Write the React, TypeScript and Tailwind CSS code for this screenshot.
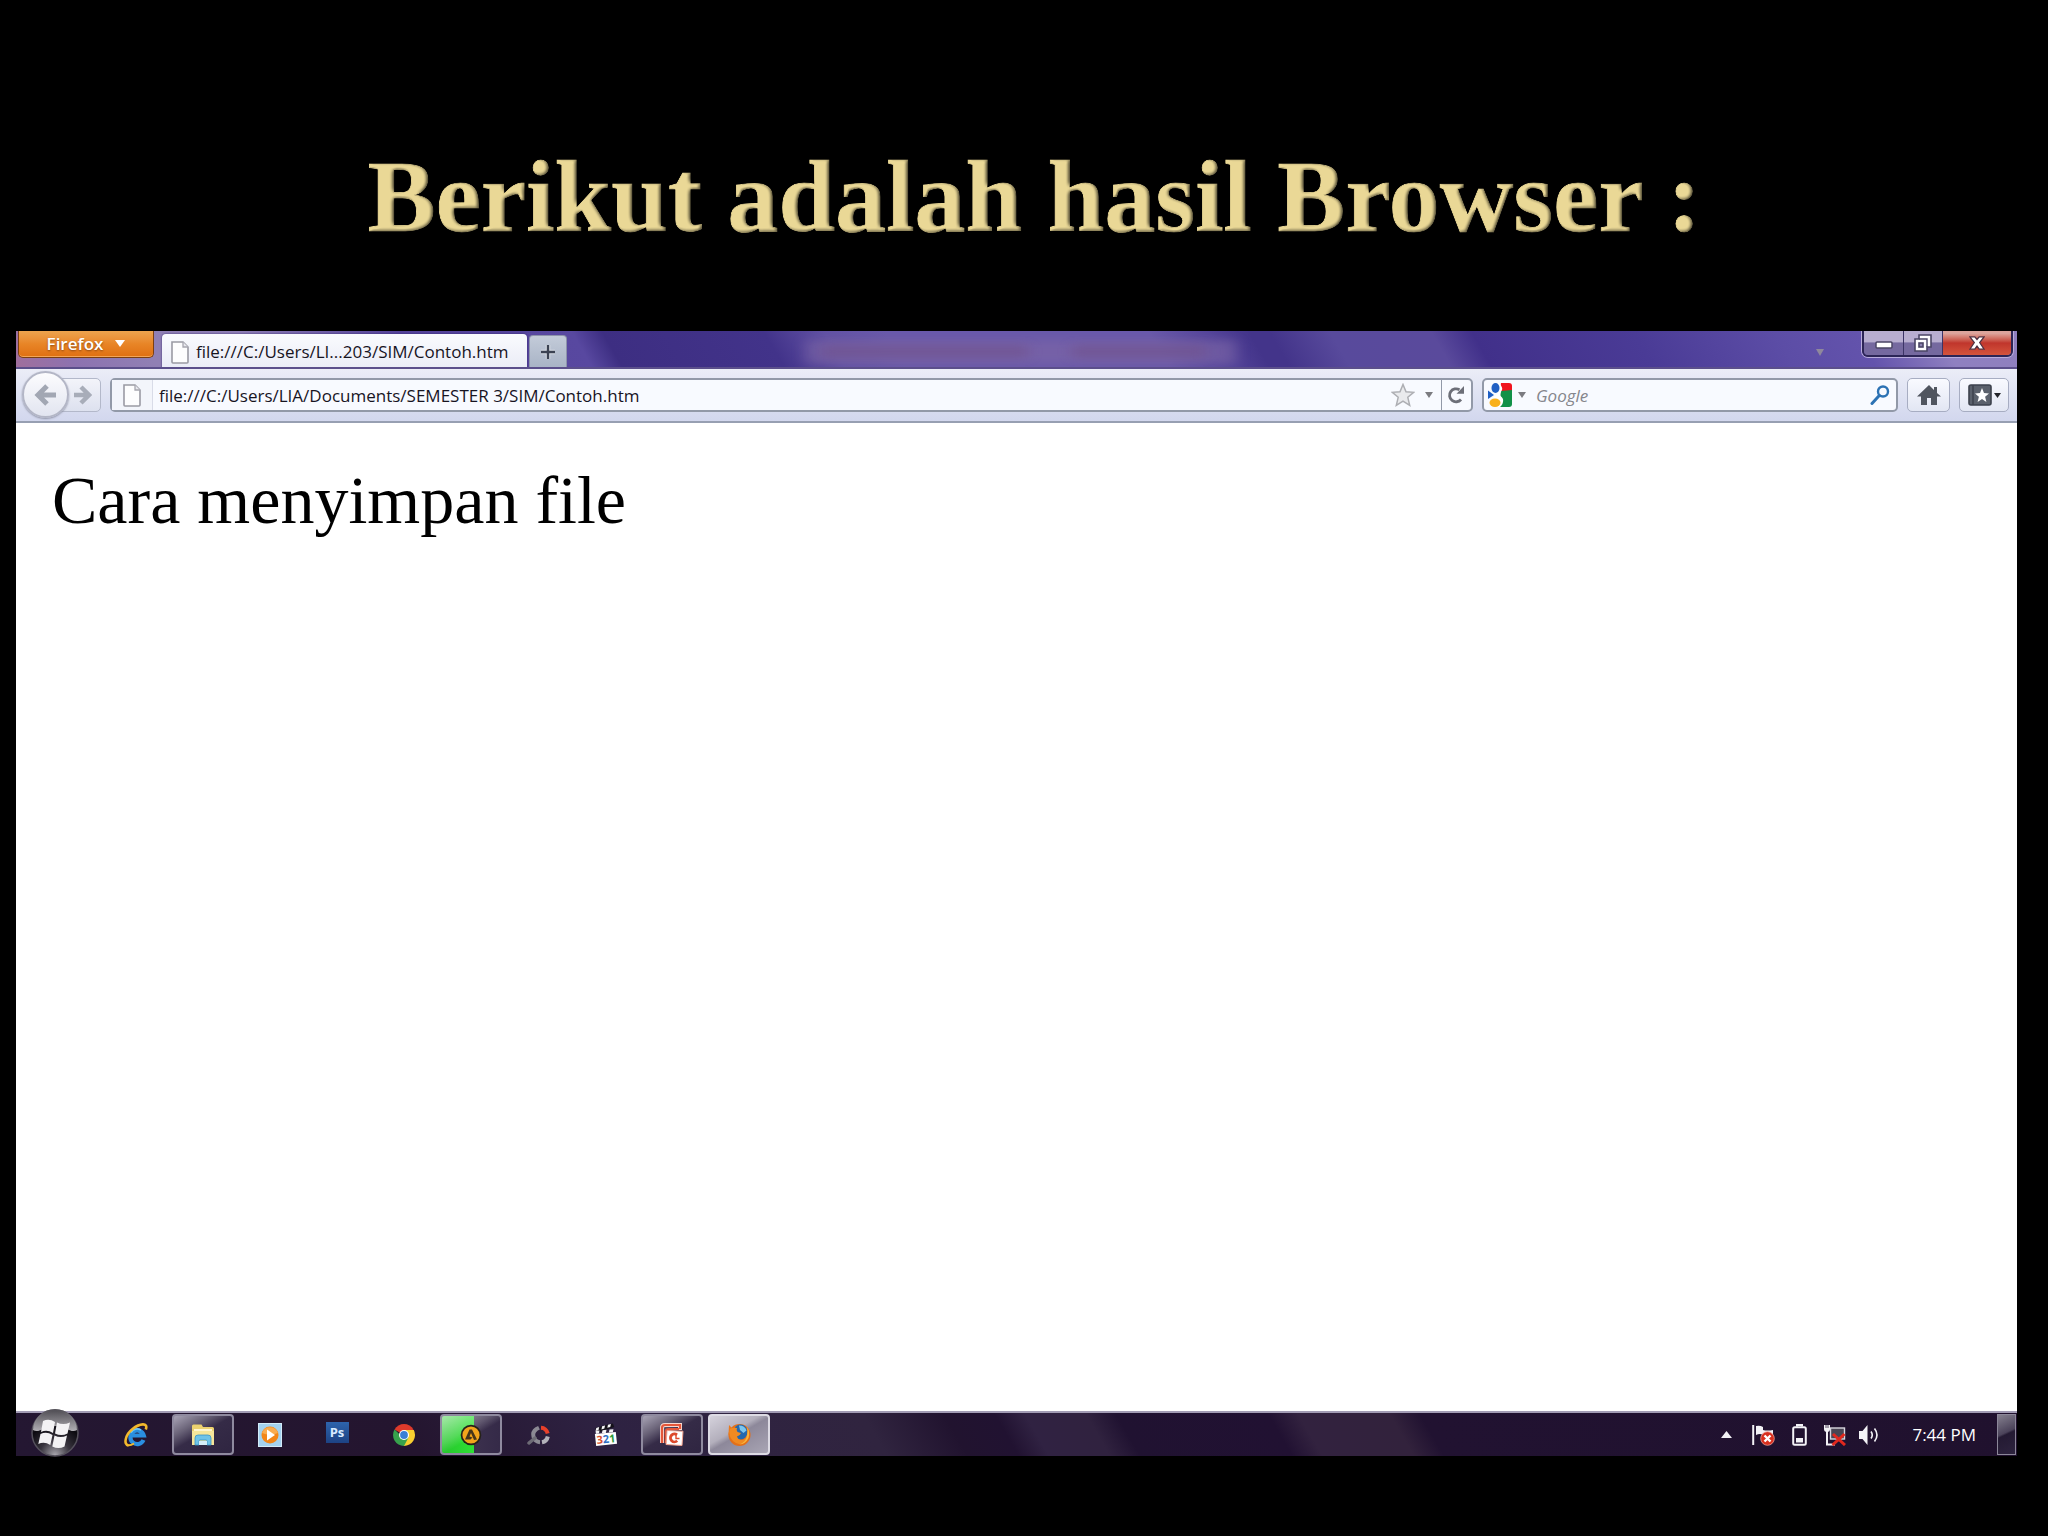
import React from "react";

function PageIcon() {
  return (
    <svg className="h-6 w-[18px] shrink-0" viewBox="0 0 18 24" fill="none" aria-hidden="true">
      <path d="M1 2h11l5 5v15a1 1 0 0 1-1 1H2a1 1 0 0 1-1-1z" fill="#fdfdfe" stroke="#9a9aa4" strokeWidth="1.6" />
      <path d="M12 2v5h5" fill="#e8e8ee" stroke="#a7a7b0" strokeWidth="1.3" />
    </svg>
  );
}

function Caret({ color = "#7b7b80" }: { color?: string }) {
  return (
    <svg className="h-[7px] w-[10px] shrink-0" viewBox="0 0 10 7" aria-hidden="true">
      <path d="M0 0h10L5 7z" fill={color} />
    </svg>
  );
}

function TitleBar() {
  return (
    <div className="relative flex h-[38px] items-start overflow-hidden border-b-2 border-[#5b4f8b] bg-[linear-gradient(60deg,#a06f9c_0,#8d72b0_3%,#9080b4_7%,#8f7fb6_12%,#55439a_20%,#5848a0_28.5%,#3d2e82_30%,#42338a_38%,#6151a4_41%,#6959aa_44%,#6959aa_57%,#54449a_60%,#43348a_62%,#43348a_63%,#584a9c_66%,#5a4a9c_71%,#41308a_73%,#4a3b96_81%,#5c4da6_88%,#6353ac_92%,#8f80c0_96%,#8f7fbe_100%)]">
      <svg className="absolute inset-y-0 left-[760px] h-full w-[520px]" viewBox="0 0 520 36" preserveAspectRatio="none" aria-hidden="true">
        <defs>
          <filter id="glow" x="-20%" y="-80%" width="140%" height="260%">
            <feGaussianBlur stdDeviation="7 4" />
          </filter>
        </defs>
        <rect x="30" y="9" width="430" height="24" fill="#7d66a6" opacity=".6" filter="url(#glow)" />
        <rect x="46" y="14" width="206" height="13" fill="#70518c" opacity=".6" filter="url(#glow)" />
        <rect x="296" y="14" width="134" height="13" fill="#70518c" opacity=".6" filter="url(#glow)" />
      </svg>
      <button className="relative ml-[2px] flex h-[27px] w-[136px] items-center justify-center gap-3 rounded-b-[5px] border border-t-0 border-[#7c3f10] bg-linear-to-b from-[#eda44e] via-[#e88526] to-[#df6f10] pb-px font-['Open_Sans','Noto_Sans',sans-serif] text-[17px] font-semibold text-white [text-shadow:0_1px_2px_#8a4510] shadow-[inset_0_-1px_0_#f3a556]">
        Firefox
        <Caret color="#ffffff" />
      </button>
      <div className="relative ml-2 mt-[3px] flex h-[36px] w-[365px] items-center rounded-t-[4px] bg-linear-to-b from-[#fafbfe] to-[#e9ebf6] pl-[9px] shadow-[0_0_2px_#2d2168]">
        <PageIcon />
        <span className="ml-[7px] whitespace-nowrap text-[17px] text-[#17141f]">file:///C:/Users/LI...203/SIM/Contoh.htm</span>
      </div>
      <button aria-label="New tab" className="relative ml-[2px] mt-1 flex h-8 w-[38px] items-center justify-center rounded-t-[4px] border border-b-0 border-[#8d93ab] bg-linear-to-b from-[#c3cbd9] to-[#a9b4c6]">
        <svg className="size-4" viewBox="0 0 16 16" aria-hidden="true">
          <path d="M8 1v14M1 8h14" stroke="#fff" strokeOpacity=".5" strokeWidth="4.5" />
          <path d="M8 1v14M1 8h14" stroke="#3b4252" strokeWidth="2.4" />
        </svg>
      </button>
      <div className="relative ml-auto flex items-start">
        <svg className="mr-[38px] mt-[18px] h-[7px] w-2" viewBox="0 0 8 7" aria-hidden="true">
          <path d="M0 0h8L4 7z" fill="#8f889c" />
        </svg>
        <div className="mr-1 flex h-[26px] w-[151px] overflow-hidden rounded-b-[6px] border-2 border-t-0 border-[#2c2556] shadow-[0_0_0_1px_#b9addd]">
          <button aria-label="Minimize" className="flex w-10 items-center justify-center border-r border-[#3c3466] bg-linear-to-b from-[#b8aed0] from-45% to-[#75699f] to-50%">
            <svg className="mt-1 h-2 w-[18px]" viewBox="0 0 18 8" aria-hidden="true">
              <rect x="1" y="1" width="16" height="6" rx="1" fill="#fff" stroke="#4b4666" strokeWidth="1.5" />
            </svg>
          </button>
          <button aria-label="Restore" className="flex w-[39px] items-center justify-center border-r border-[#3c3466] bg-linear-to-b from-[#b8aed0] from-45% to-[#75699f] to-50%">
            <svg className="h-[18px] w-[18px]" viewBox="0 0 18 18" aria-hidden="true">
              <path d="M5 1h12v12h-4v4H1V5h4z" fill="#fff" stroke="#4b4666" strokeWidth="1.6" />
              <path d="M5 5h8v8" fill="none" stroke="#4b4666" strokeWidth="1.4" />
              <rect x="5" y="9" width="4" height="4" fill="#8d83b2" stroke="#4b4666" strokeWidth="1.6" />
            </svg>
          </button>
          <button aria-label="Close" className="flex flex-1 items-center justify-center bg-linear-to-b from-[#dca49c] from-10% via-[#c0352c] via-50% to-[#d4543c]">
            <svg className="h-4 w-[16px]" viewBox="0 0 18 16" aria-hidden="true">
              <path d="M1 1h5.500L9 4 11.500 1H17l-5 6.500L17 15h-5.500L9 11.500 6.500 15H1l5-7.500z" fill="#fff" stroke="#503040" strokeWidth="1.400" />
            </svg>
          </button>
        </div>
      </div>
    </div>
  );
}

function GoogleIcon() {
  return (
    <svg className="h-6 w-6 shrink-0" viewBox="0 0 24 24" aria-hidden="true">
      <path d="M11 0h10a3 3 0 0 1 3 3v5H13z" fill="#f0141e" />
      <path d="M13 8l11-1v14a3 3 0 0 1-3 3H11z" fill="#119147" />
      <path d="M0 7.500l6 4.500-6 4z" fill="#1f5fc4" />
      <path d="M10 0h3c-1 3 2 4 1 7-1 2.500-3 3-2 5s4 3 3 7c-.6 3-2 4-3 5H9l-4-9 5-5z" fill="#fff" />
      <ellipse cx="7.500" cy="5" rx="4" ry="5" fill="#1f5fc4" />
      <ellipse cx="7" cy="19.800" rx="5.500" ry="4.200" fill="#f9b01b" />
    </svg>
  );
}

function Toolbar() {
  return (
    <div className="flex h-[54px] items-start border-b-2 border-[#979fb2] bg-linear-to-b from-[#ebedf7] to-[#d2d7ee] pl-[6px] pr-2">
      <div className="mt-[2px] flex shrink-0 items-center">
        <button aria-label="Back" className="relative flex size-[47px] items-center justify-center rounded-full border-2 border-[#b3b6c6] bg-linear-to-b from-[#fcfcfe] to-[#e2e5f0] shadow-[0_1px_2px_#8f93a6]">
          <svg className="h-[22px] w-[23px]" viewBox="0 0 23 22" fill="none" aria-hidden="true">
            <path d="M13 2L4 11l9 9M4 11h18" stroke="#a2a7b3" strokeWidth="5" />
          </svg>
        </button>
        <button aria-label="Forward" className="-ml-2 flex h-[34px] w-10 items-center justify-center rounded-r-[5px] border border-[#b3b8ca] bg-linear-to-b from-[#f3f4fa] to-[#dde1ef] pl-1">
          <svg className="h-5 w-[18px]" viewBox="0 0 18 20" fill="none" aria-hidden="true">
            <path d="M7 2l8 8-8 8M14 10H0" stroke="#a8adb9" strokeWidth="4.500" />
          </svg>
        </button>
      </div>
      <div className="ml-[9px] mt-[9px] flex h-[34px] flex-1 items-center rounded-[5px] border-2 border-[#9299a8] bg-[#f8faff]">
        <div className="flex h-full w-[41px] items-center justify-center border-r border-[#d9dce8] bg-[#f3f5fb]">
          <PageIcon />
        </div>
        <input
          aria-label="Address"
          defaultValue="file:///C:/Users/LIA/Documents/SEMESTER 3/SIM/Contoh.htm"
          className="ml-[6px] h-full min-w-0 flex-1 bg-transparent text-[17px] text-[#17141f] outline-none"
        />
        <button aria-label="Bookmark this page" className="flex items-center">
          <svg className="size-6" viewBox="0 0 24 24" aria-hidden="true">
            <path d="M12 1.500l3 7.200 7.700.6-5.900 5 1.900 8L12 18.200 5.300 22.300l1.900-8-5.900-5 7.700-.6z" fill="#e9eaed" stroke="#adaeb3" strokeWidth="1.500" />
          </svg>
        </button>
        <button aria-label="Show history" className="ml-[10px] mr-2 flex items-center">
          <svg className="h-[6px] w-2" viewBox="0 0 8 6" aria-hidden="true">
            <path d="M0 0h8L4 6z" fill="#7b7b80" />
          </svg>
        </button>
        <button aria-label="Reload" className="flex h-full w-[30px] items-center justify-center border-l border-[#9299a8] pr-[2px]">
          <svg className="h-[18px] w-[18px]" viewBox="0 0 18 18" fill="none" aria-hidden="true">
            <path d="M14 13.500A6.500 6.500 0 1 1 12.500 3.800" stroke="#6d6f78" strokeWidth="2.800" />
            <path d="M9.500 7.800h7.500V0z" fill="#6d6f78" />
          </svg>
        </button>
      </div>
      <div className="ml-[9px] mt-[9px] flex h-[34px] w-[416px] shrink-0 items-center rounded-[5px] border-2 border-[#9299a8] bg-[#f8faff] pl-1 pr-[6px]">
        <GoogleIcon />
        <button aria-label="Choose search engine" className="ml-[6px] flex items-center">
          <svg className="h-[6px] w-2" viewBox="0 0 8 6" aria-hidden="true">
            <path d="M0 0h8L4 6z" fill="#7b7b80" />
          </svg>
        </button>
        <input aria-label="Search" placeholder="Google" className="ml-[10px] h-full min-w-0 flex-1 bg-transparent text-[17px] italic outline-none placeholder:text-[#85868c]" />
        <button aria-label="Search the web" className="flex items-center">
          <svg className="size-5" viewBox="0 0 20 20" fill="none" aria-hidden="true">
            <circle cx="13" cy="6.500" r="5" stroke="#2c72b4" strokeWidth="2.400" />
            <path d="M9.300 10.500L2 18.500" stroke="#2c72b4" strokeWidth="3" strokeLinecap="round" />
          </svg>
        </button>
      </div>
      <button aria-label="Home" className="ml-[9px] mt-[9px] flex h-[34px] w-[43px] shrink-0 items-center justify-center rounded-[5px] border border-[#a7adc2] bg-linear-to-b from-[#f9faff] to-[#e2e6f3]">
        <svg className="h-5 w-6" viewBox="0 0 24 20" aria-hidden="true">
          <path d="M12 0l5 5V2h3v6l4 3.500h-4V20h-6v-7h-4v7H4v-8.500H0z" fill="#50555f" />
        </svg>
      </button>
      <button aria-label="Bookmarks" className="ml-[9px] mt-[9px] flex h-[34px] w-[50px] shrink-0 items-center justify-center gap-[2px] rounded-[5px] border border-[#a7adc2] bg-linear-to-b from-[#f9faff] to-[#e2e6f3]">
        <svg className="h-[22px] w-6" viewBox="0 0 24 22" aria-hidden="true">
          <rect x="1" y="1" width="22" height="20" rx="2" fill="#5b616c" stroke="#3d424d" strokeWidth="1.600" />
          <path d="M5 1v20" stroke="#3d424d" strokeWidth="1.500" />
          <path d="M14 4l2 5 5 .4-3.900 3.300 1.300 5.300-4.400-2.900-4.400 2.900 1.300-5.300L7 9.400 12 9z" fill="#fff" />
        </svg>
        <svg className="h-[5px] w-[7px]" viewBox="0 0 7 5" aria-hidden="true">
          <path d="M0 0h7L3.500 5z" fill="#22242a" />
        </svg>
      </button>
    </div>
  );
}

function StartIcon() {
  return (
    <svg className="h-[50px] w-[48px]" viewBox="0 0 48 50" aria-hidden="true">
      <defs>
        <radialGradient id="orb" cx="50%" cy="98%" r="95%">
          <stop offset="0" stopColor="#a8a6ad" />
          <stop offset=".35" stopColor="#37333d" />
          <stop offset=".7" stopColor="#0c0a10" />
          <stop offset="1" stopColor="#3c3942" />
        </radialGradient>
        <linearGradient id="orbTop" x1="0" y1="0" x2="0" y2="1">
          <stop offset="0" stopColor="#4c4a50" />
          <stop offset="1" stopColor="#cfcdd2" />
        </linearGradient>
      </defs>
      <circle cx="24" cy="25" r="23" fill="url(#orb)" stroke="#55515c" strokeWidth="1.500" />
      <path d="M2 22A22 21 0 0 1 46 22C40 26 35 18 24 18S8 26 2 22z" fill="url(#orbTop)" opacity=".85" />
      <g fill="#f3f2f4">
        <path d="M12 13q6-3 12 1l-2 11q-6-4-12-1z" />
        <path d="M26 14.500q6 3 13 0l-2.500 11q-6 3-12.500 0z" />
        <path d="M9.500 26q6-3 12 1l-2.200 10q-6-4-12-1z" />
        <path d="M23.500 27.500q6 3 12.500 0l-2.500 11q-6 3-12.200 0z" />
      </g>
    </svg>
  );
}

function IeIcon() {
  return (
    <svg className="size-6" viewBox="0 0 24 24" fill="none" aria-hidden="true">
      <path d="M19.500 17A6.800 6.800 0 1 1 19.800 12.500H8" stroke="#2a8fe0" strokeWidth="4.200" />
      <path d="M17 7A7 7 0 0 0 7 9.500" stroke="#6cc8fa" strokeWidth="1.800" />
      <path d="M4.500 22.500C-1 21.500 1.500 11.500 8.500 6S24.500-1 21.800 6.500" stroke="#f3b92c" strokeWidth="2.600" />
      <path d="M3 22q3 1 7-1.500" stroke="#f3b92c" strokeWidth="2" />
    </svg>
  );
}

function FolderIcon() {
  return (
    <svg className="h-[22px] w-6" viewBox="0 0 24 22" aria-hidden="true">
      <path d="M1 2q0-1.500 1.500-1.500h8L12 3h9.500Q23 3 23 4.500V20H1z" fill="#ecd26f" />
      <path d="M3 5h18v3H3z" fill="#fff6cf" />
      <path d="M1 7h22v14H1z" fill="#f7e69a" />
      <path d="M4 21v-7q0-3 3-3h10q3 0 3 3v7h-4v-4q0-1-1-1H9q-1 0-1 1v4z" fill="#6fc3e8" stroke="#3b93c2" strokeWidth=".8" />
      <path d="M8 21v-4h8v4z" fill="#d6eef8" />
    </svg>
  );
}

function MediaIcon() {
  return (
    <svg className="size-6" viewBox="0 0 24 24" aria-hidden="true">
      <rect x=".5" y=".5" width="23" height="23" fill="#a4d2ef" stroke="#d3ebf8" />
      <circle cx="12" cy="12" r="8.500" fill="#f28618" />
      <path d="M4 10a8.500 8.500 0 0 1 16 0q-8 3-16 0z" fill="#f9ac50" />
      <path d="M9 6.500l8 5.500-8 5.500z" fill="#fff" />
    </svg>
  );
}

function PsIcon() {
  return (
    <span className="mb-1 flex h-[21px] w-[23px] items-center justify-center bg-linear-to-b from-[#2e64ac] to-[#1d4384] text-[13px] font-bold leading-none text-[#d9ecff]">
      Ps
    </span>
  );
}

function ChromeIcon() {
  return (
    <svg className="size-[22px]" viewBox="0 0 22 22" aria-hidden="true">
      <path d="M11 11L1.500 5.500A11 11 0 0 1 20.500 5.500z" fill="#de3a2b" />
      <path d="M11 6h9.800A11 11 0 0 1 11 22z" fill="#f8cf30" />
      <path d="M1.500 5.500A11 11 0 0 0 11 22l4.500-8.500-4.500 1z" fill="#37a24c" />
      <circle cx="11" cy="11" r="5" fill="#fff" />
      <circle cx="11" cy="11" r="3.900" fill="#3a7fd5" />
    </svg>
  );
}

function AudioIcon() {
  return (
    <svg className="size-[22px]" viewBox="0 0 22 22" aria-hidden="true">
      <circle cx="11" cy="11" r="10.300" fill="#262219" />
      <circle cx="11" cy="11" r="8.600" fill="#f2a51c" />
      <path d="M5 15.500l4.500-10h2.500l5 10-3 .5-3-7-1.500 3.500 3 1-2 2z" fill="#46351a" />
    </svg>
  );
}

function CleanerIcon() {
  return (
    <svg className="h-5 w-[23px]" viewBox="0 0 23 20" fill="none" aria-hidden="true">
      <path d="M14 2.800A7.200 7.200 0 0 1 20.700 8.500" stroke="#e8402a" strokeWidth="4" />
      <path d="M20.800 11.500A7.200 7.200 0 0 1 15 17.200" stroke="#b3b2ba" strokeWidth="4" />
      <path d="M13 17.200A7.200 7.200 0 0 1 9.500 4L12 2.800" stroke="#8b8993" strokeWidth="4" />
      <path d="M8 13l-6 5" stroke="#6d6b75" strokeWidth="3.500" strokeLinecap="round" />
    </svg>
  );
}

function ClapperIcon() {
  return (
    <span className="flex w-[21px] flex-col -rotate-6">
      <svg className="h-[9px] w-full" viewBox="0 0 21 9" aria-hidden="true">
        <path d="M1 3l18-3 1 4-18 4z" fill="#15121a" />
        <path d="M2 3l3-.5-1 3-3 .5zM8 2l3-.5-1 3-3 .5zM14 1l3-.5-1 3-3 .5z" fill="#f4f4f6" />
        <path d="M1 6h4l-1 3H1zM8 6h4l-1 3H7zM15 6h4l-1 3h-4z" fill="#f4f4f6" />
      </svg>
      <span className="flex justify-center bg-white text-[11px] font-bold leading-3">
        <span className="text-[#d9512c]">3</span>
        <span className="text-[#2f6fc4]">2</span>
        <span className="text-[#2f9b3c]">1</span>
      </span>
    </span>
  );
}

function SlidesIcon() {
  return (
    <svg className="h-[23px] w-6" viewBox="0 0 24 23" fill="none" aria-hidden="true">
      <path d="M2 20V5q0-3 3-3h15v5" stroke="#f7d9d0" strokeWidth="4" />
      <path d="M2 20V5q0-3 3-3h15v4" stroke="#e4573a" strokeWidth="2.200" />
      <path d="M5.500 20V9q0-3 3-3H19" stroke="#e4573a" strokeWidth="1.800" />
      <path d="M7 7.500l16 .7-1 14.300-16-1z" fill="#fff" stroke="#f0a08c" strokeWidth="1" />
      <path d="M17 11.800A4 4 0 1 0 17.200 17.800" stroke="#dc4a2c" strokeWidth="2.800" />
      <path d="M16 12v3.500h3.500" stroke="#dc4a2c" strokeWidth="1.400" />
    </svg>
  );
}

function FirefoxIcon() {
  return (
    <svg className="size-6" viewBox="0 0 24 24" aria-hidden="true">
      <circle cx="12.500" cy="12" r="11" fill="#e3701a" />
      <path d="M1.500 12L2 2l3.500 3.500L11 3z" fill="#ea7a1c" />
      <ellipse cx="13.500" cy="9" rx="7" ry="7.500" fill="#2468ae" />
      <path d="M12 2.500q6 0 7.500 5l-3 2.500-3.500-3z" fill="#7cc6ee" />
      <path d="M3 6q3-2 7-1-1 2 .5 4l3.500 1q-1 3-4 3.500 1 4 6 3.500 3-1 4-5 1 5-3 8-6 3-11-2Q1 13 3 6z" fill="#f08a22" />
      <path d="M20 4q3.500 5 1.500 11-3 6-9 6.500 7-3 7.500-9Q21 8 20 4z" fill="#f8b43c" />
    </svg>
  );
}

type Task = { name: string; icon: React.ReactNode; state: "idle" | "open" | "progress" | "active" };

const tasks: Task[] = [
  { name: "Internet Explorer", icon: <IeIcon />, state: "idle" },
  { name: "Windows Explorer", icon: <FolderIcon />, state: "open" },
  { name: "Windows Media Player", icon: <MediaIcon />, state: "idle" },
  { name: "Photoshop", icon: <PsIcon />, state: "idle" },
  { name: "Chrome", icon: <ChromeIcon />, state: "idle" },
  { name: "Audio player", icon: <AudioIcon />, state: "progress" },
  { name: "CCleaner", icon: <CleanerIcon />, state: "idle" },
  { name: "Media Player Classic", icon: <ClapperIcon />, state: "idle" },
  { name: "PowerPoint", icon: <SlidesIcon />, state: "open" },
  { name: "Firefox", icon: <FirefoxIcon />, state: "active" },
];

const stateClass = {
  idle: "border-transparent",
  open: "border-[#8f8a9f] bg-[linear-gradient(150deg,#a9a4b6_0%,#6a6378_28%,#352b47_48%,#2f2541_100%)]",
  progress:
    "border-[#8f8a9f] bg-[linear-gradient(150deg,#ffffff99_0%,#ffffff33_40%,#ffffff00_55%),linear-gradient(90deg,#25c62c_0%,#2fe035_55%,#3b304d_55%,#352a48_100%)]",
  active: "border-[#dddbe4] bg-[linear-gradient(150deg,#d5d2dc_0%,#b3afbc_40%,#8d889a_50%,#a9a5b4_100%)]",
};

function Tray() {
  return (
    <div className="ml-auto flex h-full items-center">
      <button aria-label="Show hidden icons" className="flex items-center">
        <svg className="h-[7px] w-[11px]" viewBox="0 0 11 7" aria-hidden="true">
          <path d="M5.500 0L11 7H0z" fill="#f1f0f4" />
        </svg>
      </button>
      <button aria-label="Action center" className="ml-5 flex items-center">
        <svg className="h-[22px] w-[23px]" viewBox="0 0 23 22" aria-hidden="true">
          <path d="M1.200 1v20" stroke="#f3f2f6" strokeWidth="2" />
          <path d="M4 2q4-1 7 1v3q4 1 10 0v6q-6 2-10-1-3-2-7 0z" fill="#f3f2f6" />
          <circle cx="15.500" cy="14.500" r="6.800" fill="#d8301f" stroke="#f0a096" strokeWidth=".8" />
          <path d="M12.500 11.500l6 6M18.500 11.500l-6 6" stroke="#fff" strokeWidth="2.400" />
        </svg>
      </button>
      <button aria-label="Battery" className="ml-[17px] flex items-center">
        <svg className="h-[22px] w-[15px]" viewBox="0 0 15 22" aria-hidden="true">
          <path d="M5 2.500V1h5v1.500" fill="none" stroke="#f3f2f6" strokeWidth="2" />
          <rect x="1.200" y="3.200" width="12.600" height="17.500" rx="1.500" fill="none" stroke="#f3f2f6" strokeWidth="2" />
          <path d="M4 14h7v4.500H4z" fill="#f3f2f6" />
        </svg>
      </button>
      <button aria-label="Network" className="ml-4 flex items-center">
        <svg className="h-[22px] w-[23px]" viewBox="0 0 23 22" fill="none" aria-hidden="true">
          <rect x="7.500" y="4" width="14" height="11" fill="#4a4654" stroke="#d8d6de" strokeWidth="1.400" />
          <path d="M1 1h6v4q0 3-3 3T1 5z" fill="#f3f2f6" />
          <path d="M4 6v14.500h8" stroke="#f3f2f6" strokeWidth="2" />
          <path d="M3 1v3M5 1v3" stroke="#2a1d38" strokeWidth=".8" />
          <path d="M10 10l12 11M21.500 10L9.500 21" stroke="#e2281e" strokeWidth="3" />
        </svg>
      </button>
      <button aria-label="Volume" className="ml-3 flex items-center">
        <svg className="h-[22px] w-[22px]" viewBox="0 0 22 22" fill="none" aria-hidden="true">
          <path d="M1 7h3.500L9.500 1v20L4.500 15H1z" fill="#f3f2f6" />
          <path d="M13 7.500q2.500 3.500 0 7M16.500 4.500q5 6.500 0 13" stroke="#f3f2f6" strokeWidth="1.600" />
        </svg>
      </button>
      <time className="ml-8 whitespace-nowrap text-[17px] text-white">7:44 PM</time>
      <button aria-label="Show desktop" className="ml-[21px] mr-px h-[41px] w-[19px] border border-[#8c8799] bg-[linear-gradient(155deg,#85808f_0%,#4b435a_45%,#241a33_50%,#2d233e_100%)]" />
    </div>
  );
}

function Taskbar() {
  return (
    <div className="flex h-[45px] items-center border-t-2 border-[#a29cb4] bg-[linear-gradient(60deg,#241732_0%,#24152f_20%,#2e2242_30%,#30243f_43%,#21132f_47%,#211231_49.5%,#302242_51%,#30223f_54%,#201231_55.500%,#211132_63%,#32223f_64.500%,#32223c_69%,#211231_70.500%,#20112e_100%)]">
      <button aria-label="Start" className="relative -mt-1 ml-[15px] flex w-12 items-center justify-center">
        <StartIcon />
      </button>
      <div className="ml-[26px] flex gap-[5px]">
        {tasks.map((t) => (
          <button key={t.name} aria-label={t.name} className={`flex h-[41px] w-[62px] items-center justify-center rounded-[4px] border-2 ${stateClass[t.state]}`}>
            {t.icon}
          </button>
        ))}
      </div>
      <Tray />
    </div>
  );
}

export default function App() {
  return (
    <div className="flex min-h-screen flex-col bg-black pb-20 pl-4 pr-[31px] font-['Open_Sans','Noto_Sans',sans-serif]">
      <svg className="absolute size-0" aria-hidden="true">
        <defs>
          <filter id="bevel" x="-5%" y="-20%" width="110%" height="140%" colorInterpolationFilters="sRGB">
            <feMorphology in="SourceAlpha" operator="dilate" radius="1" result="bold" />
            <feGaussianBlur in="bold" stdDeviation="2" result="height" />
            <feDiffuseLighting in="height" surfaceScale="5" diffuseConstant="1.200" lightingColor="#ffffff" result="light">
              <feDistantLight azimuth="205" elevation="58" />
            </feDiffuseLighting>
            <feComposite in="SourceGraphic" in2="light" operator="arithmetic" k1=".6" k2=".4" k3="0" k4="0" result="lit" />
            <feComposite in="lit" in2="SourceAlpha" operator="in" />
          </filter>
        </defs>
      </svg>
      <header className="flex h-[331px] items-center justify-center pl-9 pt-[62px]">
        <h1 className="whitespace-nowrap font-['Liberation_Serif',serif] text-[102px] font-bold leading-none text-[#ead896] [-webkit-text-stroke:1px_#ead896] [filter:url(#bevel)]">
          Berikut adalah hasil Browser :
        </h1>
      </header>
      <main className="flex flex-1 flex-col bg-white">
        <TitleBar />
        <Toolbar />
        <article className="flex-1 bg-white px-9 pt-[38px]">
          <p className="font-['Liberation_Serif',serif] text-[68px] leading-[78px] text-black">Cara menyimpan file</p>
        </article>
        <Taskbar />
      </main>
    </div>
  );
}
